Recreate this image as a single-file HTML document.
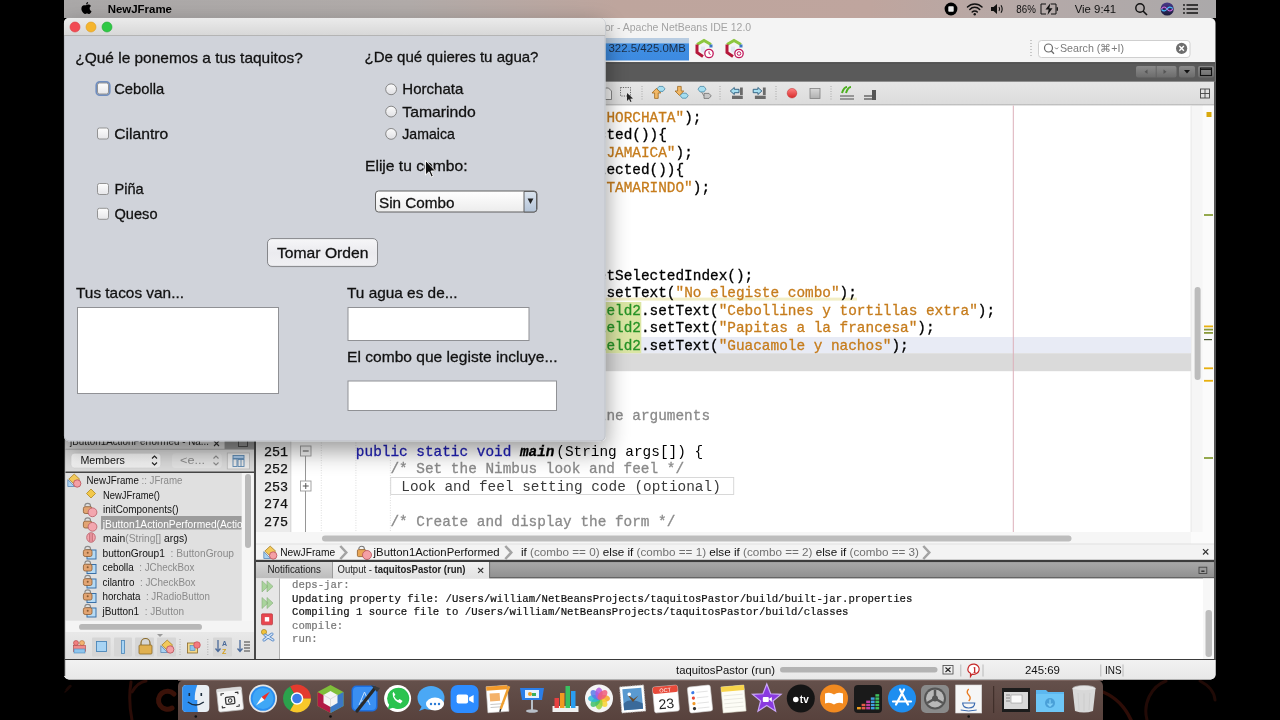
<!DOCTYPE html>
<html><head><meta charset="utf-8"><style>html,body{margin:0;padding:0;background:#000}body{width:1280px;height:720px;overflow:hidden}svg{display:block;will-change:transform}</style></head><body>
<svg width="1280" height="720" viewBox="0 0 1280 720">
<defs><linearGradient id="gmenu" x1="0" y1="0" x2="1" y2="0"><stop offset="0" stop-color="#aaa8a8"/><stop offset="0.3" stop-color="#b1aba9"/><stop offset="0.48" stop-color="#bea59d"/><stop offset="0.7" stop-color="#bfa59e"/><stop offset="0.85" stop-color="#b4a9a8"/><stop offset="1" stop-color="#aba9aa"/></linearGradient><linearGradient id="gsiri" x1="0" y1="0" x2="0" y2="1"><stop offset="0" stop-color="#4a3a8a"/><stop offset="1" stop-color="#1a1a3a"/></linearGradient><linearGradient id="gmem" x1="0" y1="0" x2="0" y2="1"><stop offset="0" stop-color="#b9cde2"/><stop offset="0.22" stop-color="#b9cde2"/><stop offset="0.26" stop-color="#3f8fe3"/><stop offset="1" stop-color="#3d8ae0"/></linearGradient><linearGradient id="gnavbtn" x1="0" y1="0" x2="0" y2="1"><stop offset="0" stop-color="#8a8a8a"/><stop offset="1" stop-color="#6c6c6c"/></linearGradient><linearGradient id="gedtb" x1="0" y1="0" x2="0" y2="1"><stop offset="0" stop-color="#e6e6e6"/><stop offset="1" stop-color="#dcdcdc"/></linearGradient><linearGradient id="grec" x1="0" y1="0" x2="0" y2="1"><stop offset="0" stop-color="#ff8080"/><stop offset="1" stop-color="#d62a2a"/></linearGradient><linearGradient id="gstop" x1="0" y1="0" x2="0" y2="1"><stop offset="0" stop-color="#d8d8d8"/><stop offset="1" stop-color="#b0b0b0"/></linearGradient><linearGradient id="gtabbar" x1="0" y1="0" x2="0" y2="1"><stop offset="0" stop-color="#a8a8a8"/><stop offset="1" stop-color="#8e8e8e"/></linearGradient><linearGradient id="gtabn" x1="0" y1="0" x2="0" y2="1"><stop offset="0" stop-color="#d4d4d4"/><stop offset="1" stop-color="#bcbcbc"/></linearGradient><linearGradient id="gtabo" x1="0" y1="0" x2="0" y2="1"><stop offset="0" stop-color="#f0f0f0"/><stop offset="1" stop-color="#e2e2e2"/></linearGradient><linearGradient id="gstatus" x1="0" y1="0" x2="0" y2="1"><stop offset="0" stop-color="#f2f2f2"/><stop offset="1" stop-color="#e8e8e8"/></linearGradient><linearGradient id="gmcombo" x1="0" y1="0" x2="0" y2="1"><stop offset="0" stop-color="#fbfbfb"/><stop offset="1" stop-color="#eeeeee"/></linearGradient><linearGradient id="gnavtb" x1="0" y1="0" x2="0" y2="1"><stop offset="0" stop-color="#e8e8e8"/><stop offset="1" stop-color="#dedede"/></linearGradient><linearGradient id="gdock" x1="0" y1="0" x2="0" y2="1"><stop offset="0" stop-color="#64504b"/><stop offset="1" stop-color="#58423d"/></linearGradient><filter id="shadow" x="-15%" y="-15%" width="140%" height="140%"><feGaussianBlur in="SourceAlpha" stdDeviation="12"/><feOffset dx="0" dy="9"/><feComponentTransfer><feFuncA type="linear" slope="0.42"/></feComponentTransfer><feMerge><feMergeNode/><feMergeNode in="SourceGraphic"/></feMerge></filter><linearGradient id="gtitle" x1="0" y1="0" x2="0" y2="1"><stop offset="0" stop-color="#ebebeb"/><stop offset="1" stop-color="#d7d7d7"/></linearGradient><linearGradient id="gcb" x1="0" y1="0" x2="0" y2="1"><stop offset="0" stop-color="#fdfdfd"/><stop offset="1" stop-color="#e6e6e9"/></linearGradient><linearGradient id="grb" x1="0" y1="0" x2="0" y2="1"><stop offset="0" stop-color="#fbfbfb"/><stop offset="1" stop-color="#e0e0e4"/></linearGradient><linearGradient id="gcombo" x1="0" y1="0" x2="0" y2="1"><stop offset="0" stop-color="#ffffff"/><stop offset="1" stop-color="#ececec"/></linearGradient><linearGradient id="garrow" x1="0" y1="0" x2="0" y2="1"><stop offset="0" stop-color="#dbe4ee"/><stop offset="1" stop-color="#b4c4d8"/></linearGradient><linearGradient id="gbtn" x1="0" y1="0" x2="0" y2="1"><stop offset="0" stop-color="#f6f6f8"/><stop offset="0.5" stop-color="#ebebef"/><stop offset="1" stop-color="#f0f0f3"/></linearGradient></defs>
<rect x="0" y="0" width="1280" height="720" fill="#000" />
<g fill="none" stroke-linecap="round"><path d="M131 682 Q128 700 132 720" stroke="#2a0c07" stroke-width="3"/><path d="M132 692 Q138 682 146 681" stroke="#2a0c07" stroke-width="3"/><path d="M174 694 A9 9 0 1 0 172 708" stroke="#3a1209" stroke-width="5"/><path d="M66 690 Q70 684 71 686 Q68 690 65 692" stroke="#1a0805" stroke-width="1.5"/><path d="M1103 692 Q1122 700 1131 720" stroke="#2e0d07" stroke-width="3.5"/><path d="M1147 720 A30 32 0 0 1 1166 681" stroke="#220a06" stroke-width="3"/><path d="M1200 681 Q1214 688 1215 700" stroke="#200a06" stroke-width="3"/></g>
<rect x="64" y="0" width="1152" height="18" fill="url(#gmenu)" />
<g transform="translate(80.5,2)"><path d="M5.4 3.2 C 6.4 3.2 7.2 2.6 7.9 2.6 C 9 2.6 10 3.2 10.6 4.1 C 9.6 4.7 9.1 5.6 9.2 6.7 C 9.3 7.9 10 8.8 11 9.2 C 10.6 10.4 9.7 11.8 8.6 11.9 C 7.8 11.9 7.4 11.4 6.5 11.4 C 5.6 11.4 5.1 11.9 4.4 11.9 C 3.2 11.9 1.9 10.2 1.3 8.8 C 0.4 6.5 0.9 4.2 2.6 3.4 C 3.5 3 4.5 3.2 5.4 3.2 Z M7.6 0 C 7.8 1.1 7 2.3 5.7 2.4 C 5.5 1.3 6.4 0.2 7.6 0 Z" fill="#000"/></g>
<text x="107.7" y="13" font-family="Liberation Sans" font-size="11.4" fill="#000" font-weight="bold" textLength="64.3" lengthAdjust="spacingAndGlyphs" >NewJFrame</text>
<circle cx="951" cy="9" r="6.4" fill="#000" />
<rect x="948.3" y="6.3" width="5.4" height="5.4" fill="#e8e8e8" rx="0.8" />
<g fill="none" stroke="#111" stroke-width="1.5" stroke-linecap="round"><path d="M967.5 7 A10 10 0 0 1 982 7"/><path d="M969.8 9.5 A6.8 6.8 0 0 1 979.7 9.5"/><path d="M972.2 12 A3.5 3.5 0 0 1 977.3 12"/></g>
<circle cx="974.75" cy="14.2" r="1.2" fill="#111" />
<path d="M991 7 H993.5 L997 4 V14 L993.5 11 H991 Z" fill="#111"/><g fill="none" stroke="#111" stroke-width="1.1"><path d="M999 7 Q1000.3 9 999 11"/><path d="M1001 5.2 Q1003.4 9 1001 12.8"/></g>
<text x="1016.3" y="13.2" font-family="Liberation Sans" font-size="11.2" fill="#111" textLength="19.5" lengthAdjust="spacingAndGlyphs" >86%</text>
<g fill="none" stroke="#111" stroke-width="1"><path d="M1046 4 H1041 V14 H1046 M1051 4 H1056 V14 H1051"/></g><path d="M1057.3 7.3 V10.7" stroke="#111" stroke-width="1.3"/><path d="M1050.5 3 L1045.5 9.5 H1048.7 L1047.5 15 L1052.5 8.3 H1049.3 Z" fill="#111"/>
<text x="1074.7" y="13.2" font-family="Liberation Sans" font-size="11.6" fill="#111" textLength="41.5" lengthAdjust="spacingAndGlyphs" >Vie 9:41</text>
<circle cx="1140" cy="8" r="4.2" fill="none" stroke="#111" stroke-width="1.4"/><path d="M1143 11 L1147 15" stroke="#111" stroke-width="1.6"/>
<circle cx="1167.2" cy="9" r="6.6" fill="url(#gsiri)" />
<path d="M1161.5 9 Q1164 5 1167 9 T1172.8 9" fill="none" stroke="#d06adf" stroke-width="1.2"/><path d="M1161.5 9.5 Q1164.5 12.5 1167 9 T1172.8 8.5" fill="none" stroke="#4ac0ff" stroke-width="1.1"/>
<g stroke="#111" stroke-width="1.5"><path d="M1186.5 5 H1198 M1186.5 9 H1198 M1186.5 13 H1198"/></g><g fill="#111"><circle cx="1184" cy="5" r="0.9"/><circle cx="1184" cy="9" r="0.9"/><circle cx="1184" cy="13" r="0.9"/></g>
<rect x="64" y="18" width="1151.5" height="661.5" fill="#f4f4f4" rx="5" />
<text x="605.2" y="31" font-family="Liberation Sans" font-size="10.5" fill="#a3a3a3" text-anchor="end" transform="translate(146,0)">taquitosPastor - Apache NetBeans IDE 12.0</text>
<rect x="560" y="38" width="129" height="22.5" fill="url(#gmem)" />
<text x="608.5" y="51.8" font-family="Liberation Sans" font-size="11" fill="#1d2e45" textLength="77.5" lengthAdjust="spacingAndGlyphs" >322.5/425.0MB</text>
<g transform="translate(695,39.5)"><path d="M2 5 L9 1 L16 5" fill="none" stroke="#8cc63f" stroke-width="3"/><path d="M2 5 L2 13 L8 17" fill="none" stroke="#b5183b" stroke-width="3"/><path d="M16 5 L16 8" fill="none" stroke="#3a76c4" stroke-width="3"/><path d="M6 7 L10 7 L10 14 L6 12 Z" fill="#dfe7f2"/><circle cx="14" cy="14" r="4.2" fill="#fff" stroke="#c2185b" stroke-width="1.3"/><path d="M14 11.8 V14 L15.6 15" stroke="#c2185b" stroke-width="1" fill="none"/></g>
<g transform="translate(725,39.5)"><path d="M2 5 L9 1 L16 5" fill="none" stroke="#8cc63f" stroke-width="3"/><path d="M2 5 L2 13 L8 17" fill="none" stroke="#b5183b" stroke-width="3"/><path d="M16 5 L16 8" fill="none" stroke="#3a76c4" stroke-width="3"/><path d="M6 7 L10 7 L10 14 L6 12 Z" fill="#dfe7f2"/><circle cx="14" cy="14" r="4.2" fill="#fff" stroke="#c2185b" stroke-width="1.3"/><circle cx="14" cy="14" r="1.8" fill="none" stroke="#c2185b" stroke-width="1"/></g>
<line x1="1031" y1="40" x2="1031" y2="58" stroke="#9a9a9a" stroke-width="1" stroke-dasharray="1 2"/>
<rect x="1038.5" y="40.5" width="151.5" height="17" fill="#ffffff" rx="3" stroke="#cfcfcf" stroke-width="1" />
<circle cx="1048.5" cy="48" r="4" fill="none" stroke="#6a6a6a" stroke-width="1.2"/><path d="M1051.3 51 L1054 53.8" stroke="#6a6a6a" stroke-width="1.3"/><path d="M1055 47.5 l1.6 1.6 l1.6 -1.6" fill="none" stroke="#6a6a6a" stroke-width="0.9"/>
<text x="1060" y="52.3" font-family="Liberation Sans" font-size="10.8" fill="#7b7b7b" textLength="64" lengthAdjust="spacingAndGlyphs" >Search (⌘+I)</text>
<circle cx="1181.6" cy="48.4" r="5.6" fill="#6e6e6e" />
<path d="M1179.3 46.1 L1183.9 50.7 M1183.9 46.1 L1179.3 50.7" stroke="#fff" stroke-width="1.4"/>
<rect x="64" y="62.3" width="1151.5" height="19.5" fill="#5a5a5a" />
<line x1="64" y1="62.8" x2="1215" y2="62.8" stroke="#444444" stroke-width="1" />
<rect x="1136" y="66" width="40.5" height="11.5" fill="url(#gnavbtn)" rx="2" />
<line x1="1156.2" y1="66" x2="1156.2" y2="77.5" stroke="#5e5e5e" stroke-width="0.8" />
<path d="M1147.5 69.5 L1144.5 71.75 L1147.5 74 Z M1163.5 69.5 L1166.5 71.75 L1163.5 74 Z" fill="#555"/>
<rect x="1179" y="66" width="16" height="11.5" fill="url(#gnavbtn)" rx="2" />
<path d="M1184 70 H1190 L1187 73.5 Z" fill="#111"/>
<rect x="1198" y="66" width="16" height="11.5" fill="url(#gnavbtn)" rx="2" />
<rect x="1200.5" y="68" width="11" height="7.5" fill="none" stroke="#111" stroke-width="1.1" />
<line x1="1200.5" y1="69.3" x2="1211.5" y2="69.3" stroke="#111" stroke-width="1.2" />
<rect x="256" y="81.8" width="958.5" height="23" fill="url(#gedtb)" />
<line x1="256" y1="105" x2="1214.5" y2="105" stroke="#9e9e9e" stroke-width="1" />
<path d="M605 88 h3.5 l3 3 v8.5 h-6.5 Z" fill="#f4f4f4" stroke="#7a7a7a" stroke-width="0.9"/>
<rect x="620.5" y="87.5" width="10" height="8.5" fill="none" stroke="#5a5a5a" stroke-width="0.9" stroke-dasharray="1.2 1.2"/>
<path d="M627 93 L627 101 L629 99 L630.5 102 L631.5 101.5 L630.2 98.7 L633 98.5 Z" fill="#222"/>
<line x1="642" y1="86" x2="642" y2="100" stroke="#a8a8a8" stroke-width="1" stroke-dasharray="1 1.5"/>
<path d="M659 86.4 H663 L665 88.9 L663 91.4 H659 L657 88.9 Z" fill="#a6def0" stroke="#4a8aa8" stroke-width="0.8"/>
<path d="M656.4 88.4 L652 93 H654.6 V98.4 H658.2 V93 H660.8 Z" fill="#f2b866" stroke="#a06a20" stroke-width="0.8"/>
<path d="M682.2 93.2 H686.2 L688.2 95.7 L686.2 98.2 H682.2 L680.2 95.7 Z" fill="#a6def0" stroke="#4a8aa8" stroke-width="0.8"/>
<path d="M677.6 86.4 V91 H675 L679.4 95.4 L683.8 91 H681.2 V86.4 Z" fill="#f2b866" stroke="#a06a20" stroke-width="0.8"/>
<path d="M700 86.4 H704 L706 89.15 L704 91.9 H700 L698 89.15 Z" fill="#a6def0" stroke="#4a8aa8" stroke-width="0.8"/>
<path d="M704 93.4 H709 L711.2 95.9 L709 98.4 H704 Z" fill="#c8c8c8" stroke="#707070" stroke-width="0.8"/>
<line x1="701.5" y1="92" x2="704" y2="96" stroke="#777" stroke-width="0.8" />
<line x1="720" y1="86" x2="720" y2="100" stroke="#a8a8a8" stroke-width="1" stroke-dasharray="1 1.5"/>
<rect x="740.0" y="87.5" width="2.8" height="7.5" fill="#6a6a6a" />
<rect x="732.0" y="95.7" width="10.8" height="3.3" fill="#6a6a6a" />
<path d="M730.3 91 L734.3 87.5 V89.3 H739.0 V92.7 H734.3 V94.5 Z" fill="#a6def0" stroke="#2a5a7a" stroke-width="0.9"/>
<rect x="762.9000000000001" y="87.5" width="2.8" height="7.5" fill="#6a6a6a" />
<rect x="754.9000000000001" y="95.7" width="10.8" height="3.3" fill="#6a6a6a" />
<path d="M761.9000000000001 91 L757.9000000000001 87.5 V89.3 H753.2 V92.7 H757.9000000000001 V94.5 Z" fill="#a6def0" stroke="#2a5a7a" stroke-width="0.9"/>
<line x1="776" y1="86" x2="776" y2="100" stroke="#a8a8a8" stroke-width="1" stroke-dasharray="1 1.5"/>
<circle cx="792" cy="93.2" r="4.8" fill="url(#grec)" stroke="#c03030" stroke-width="0.5" />
<rect x="810" y="88.5" width="10" height="10" fill="url(#gstop)" stroke="#808080" stroke-width="0.8" />
<line x1="831" y1="86" x2="831" y2="100" stroke="#a8a8a8" stroke-width="1" stroke-dasharray="1 1.5"/>
<line x1="840" y1="96" x2="854" y2="96" stroke="#666" stroke-width="1.2" />
<line x1="840" y1="99" x2="854" y2="99" stroke="#666" stroke-width="1.2" />
<path d="M842 93 q2 -6 5 -6 M846 93 q2 -6 5 -6" fill="none" stroke="#4caf1f" stroke-width="2"/>
<line x1="864" y1="96" x2="876" y2="96" stroke="#555" stroke-width="1.3" />
<line x1="864" y1="99" x2="876" y2="99" stroke="#555" stroke-width="1.3" />
<rect x="872" y="90" width="4" height="10" fill="#555" />
<rect x="1200.5" y="89" width="9" height="9" fill="none" stroke="#444" stroke-width="0.9" />
<line x1="1205" y1="89" x2="1205" y2="98" stroke="#444" stroke-width="0.9" />
<line x1="1200.5" y1="93.5" x2="1209.5" y2="93.5" stroke="#444" stroke-width="0.9" />
<rect x="256" y="105.5" width="935" height="427" fill="#ffffff" />
<rect x="1191" y="105.5" width="11.5" height="427" fill="#f6f6f6" />
<line x1="1191" y1="105.5" x2="1191" y2="532" stroke="#e4e4e4" stroke-width="0.8" />
<rect x="1202.5" y="105.5" width="11.5" height="427" fill="#fbfbfb" />
<rect x="1194.6" y="287" width="6" height="93" fill="#bcbcbc" rx="3" />
<rect x="1206.5" y="112" width="5" height="5" fill="#d9a90e" />
<line x1="1204" y1="215" x2="1213" y2="215" stroke="#8aa03a" stroke-width="1.8" />
<line x1="1204" y1="326.4" x2="1213" y2="326.4" stroke="#e8b010" stroke-width="1.8" />
<line x1="1204" y1="329.6" x2="1213" y2="329.6" stroke="#8a9a3a" stroke-width="1.8" />
<line x1="1204" y1="332.9" x2="1213" y2="332.9" stroke="#8a9a3a" stroke-width="1.8" />
<line x1="1204" y1="368.3" x2="1213" y2="368.3" stroke="#e8b010" stroke-width="1.8" />
<line x1="1204" y1="380.8" x2="1213" y2="380.8" stroke="#e8b010" stroke-width="1.8" />
<line x1="1204" y1="458" x2="1213" y2="458" stroke="#8aa03a" stroke-width="1.8" />
<line x1="1204" y1="339.6" x2="1212" y2="339.6" stroke="#4a5a30" stroke-width="1.2" />
<rect x="256" y="337" width="935" height="16.2" fill="#e8ebf5" />
<rect x="256" y="353.2" width="935" height="18" fill="#dadada" />
<rect x="600" y="302" width="41.3" height="51.2" fill="#dbe6a4" />
<rect x="600" y="297.6" width="257" height="3" fill="#f2eec6" />
<line x1="1013.3" y1="105.5" x2="1013.3" y2="532" stroke="#dcb0ba" stroke-width="1" />
<rect x="256" y="105.5" width="34.5" height="427" fill="#ebebeb" />
<line x1="290.8" y1="105.5" x2="290.8" y2="532" stroke="#c8c8c8" stroke-width="0.8" />
<line x1="321.3" y1="440" x2="321.3" y2="532" stroke="#d6d6d6" stroke-width="0.8" stroke-dasharray="1 1.5"/>
<line x1="355.9" y1="440" x2="355.9" y2="532" stroke="#d6d6d6" stroke-width="0.8" stroke-dasharray="1 1.5"/>
<line x1="390.4" y1="460" x2="390.4" y2="532" stroke="#d6d6d6" stroke-width="0.8" stroke-dasharray="1 1.5"/>
<text x="597.78" y="121.5" font-family="Liberation Mono" font-size="14.4" xml:space="preserve"><tspan fill="#c67c1c" stroke="#c67c1c" stroke-width="0.3" >"</tspan><tspan fill="#c67c1c" stroke="#c67c1c" stroke-width="0.3" >HORCHATA"</tspan><tspan fill="#000000" stroke="#000000" stroke-width="0.3" >);</tspan></text>
<text x="597.78" y="139.08" font-family="Liberation Mono" font-size="14.4" xml:space="preserve"><tspan fill="#000000" stroke="#000000" stroke-width="0.3" >cted()){</tspan></text>
<text x="597.78" y="156.66" font-family="Liberation Mono" font-size="14.4" xml:space="preserve"><tspan fill="#c67c1c" stroke="#c67c1c" stroke-width="0.3" >"JAMAICA"</tspan><tspan fill="#000000" stroke="#000000" stroke-width="0.3" >);</tspan></text>
<text x="597.78" y="174.24" font-family="Liberation Mono" font-size="14.4" xml:space="preserve"><tspan fill="#000000" stroke="#000000" stroke-width="0.3" >lected()){</tspan></text>
<text x="597.78" y="191.82" font-family="Liberation Mono" font-size="14.4" xml:space="preserve"><tspan fill="#c67c1c" stroke="#c67c1c" stroke-width="0.3" >"TAMARINDO"</tspan><tspan fill="#000000" stroke="#000000" stroke-width="0.3" >);</tspan></text>
<text x="597.78" y="279.72" font-family="Liberation Mono" font-size="14.4" xml:space="preserve"><tspan fill="#000000" stroke="#000000" stroke-width="0.3" >etSelectedIndex();</tspan></text>
<text x="597.78" y="297.3" font-family="Liberation Mono" font-size="14.4" xml:space="preserve"><tspan fill="#000000" stroke="#000000" stroke-width="0.3" >.setText(</tspan><tspan fill="#c67c1c" stroke="#c67c1c" stroke-width="0.3" >"No elegiste combo"</tspan><tspan fill="#000000" stroke="#000000" stroke-width="0.3" >);</tspan></text>
<text x="597.78" y="314.88" font-family="Liberation Mono" font-size="14.4" xml:space="preserve"><tspan fill="#269326" stroke="#269326" stroke-width="0.3" >i</tspan><tspan fill="#269326" stroke="#269326" stroke-width="0.3" >eld2</tspan><tspan fill="#000000" stroke="#000000" stroke-width="0.3" >.setText(</tspan><tspan fill="#c67c1c" stroke="#c67c1c" stroke-width="0.3" >"Cebollines y tortillas extra"</tspan><tspan fill="#000000" stroke="#000000" stroke-width="0.3" >);</tspan></text>
<text x="597.78" y="332.46" font-family="Liberation Mono" font-size="14.4" xml:space="preserve"><tspan fill="#269326" stroke="#269326" stroke-width="0.3" >i</tspan><tspan fill="#269326" stroke="#269326" stroke-width="0.3" >eld2</tspan><tspan fill="#000000" stroke="#000000" stroke-width="0.3" >.setText(</tspan><tspan fill="#c67c1c" stroke="#c67c1c" stroke-width="0.3" >"Papitas a la francesa"</tspan><tspan fill="#000000" stroke="#000000" stroke-width="0.3" >);</tspan></text>
<text x="597.78" y="350.04" font-family="Liberation Mono" font-size="14.4" xml:space="preserve"><tspan fill="#269326" stroke="#269326" stroke-width="0.3" >i</tspan><tspan fill="#269326" stroke="#269326" stroke-width="0.3" >eld2</tspan><tspan fill="#000000" stroke="#000000" stroke-width="0.3" >.setText(</tspan><tspan fill="#c67c1c" stroke="#c67c1c" stroke-width="0.3" >"Guacamole y nachos"</tspan><tspan fill="#000000" stroke="#000000" stroke-width="0.3" >);</tspan></text>
<text x="589.14" y="420.36" font-family="Liberation Mono" font-size="14.4" xml:space="preserve"><tspan fill="#8a8a8a" stroke="#8a8a8a" stroke-width="0.3" >line arguments</tspan></text>
<text x="355.86" y="455.52" font-family="Liberation Mono" font-size="14.4" xml:space="preserve"><tspan fill="#1f1fb4" stroke="#1f1fb4" stroke-width="0.3" >public static void </tspan><tspan fill="#000000" stroke="#000000" stroke-width="0.3" font-weight="bold" font-style="italic">main</tspan></text>
<text x="556.28" y="455.52" font-family="Liberation Mono" font-size="14.4" fill="#000">(String args[]) {</text>
<text x="390.42" y="473.1" font-family="Liberation Mono" font-size="14.4" xml:space="preserve"><tspan fill="#8a8a8a" stroke="#8a8a8a" stroke-width="0.3" >/* Set the Nimbus look and feel */</tspan></text>
<rect x="390.72" y="477.47999999999996" width="343" height="17" fill="#ffffff" stroke="#d4d4d4" stroke-width="0.9" />
<text x="401.26" y="490.68" font-family="Liberation Mono" font-size="14.4" fill="#3a3a3a">Look and feel setting code (optional)</text>
<text x="390.42" y="525.84" font-family="Liberation Mono" font-size="14.4" xml:space="preserve"><tspan fill="#8a8a8a" stroke="#8a8a8a" stroke-width="0.3" >/* Create and display the form */</tspan></text>
<text x="288" y="455.52" font-family="Liberation Mono" font-size="13.4" fill="#111" text-anchor="end" stroke="#111" stroke-width="0.25">251</text>
<text x="288" y="473.1" font-family="Liberation Mono" font-size="13.4" fill="#111" text-anchor="end" stroke="#111" stroke-width="0.25">252</text>
<text x="288" y="490.68" font-family="Liberation Mono" font-size="13.4" fill="#111" text-anchor="end" stroke="#111" stroke-width="0.25">253</text>
<text x="288" y="508.26" font-family="Liberation Mono" font-size="13.4" fill="#111" text-anchor="end" stroke="#111" stroke-width="0.25">274</text>
<text x="288" y="525.84" font-family="Liberation Mono" font-size="13.4" fill="#111" text-anchor="end" stroke="#111" stroke-width="0.25">275</text>
<line x1="305.5" y1="456" x2="305.5" y2="532" stroke="#8a8a8a" stroke-width="0.9" />
<rect x="300.5" y="446" width="10.5" height="10" fill="#f4f4f4" stroke="#9a9a9a" stroke-width="0.9" />
<line x1="302.8" y1="451" x2="308.7" y2="451" stroke="#555" stroke-width="1" />
<rect x="300.5" y="481" width="10.5" height="10" fill="#ffffff" stroke="#9a9a9a" stroke-width="0.9" />
<line x1="302.8" y1="486" x2="308.7" y2="486" stroke="#555" stroke-width="1" />
<line x1="305.75" y1="483" x2="305.75" y2="489" stroke="#555" stroke-width="1" />
<rect x="256" y="532" width="958" height="12" fill="#f6f6f6" />
<rect x="1191" y="532" width="23" height="12" fill="#fbfbfb" />
<rect x="322" y="535.5" width="749.5" height="6" fill="#bdbdbd" rx="3" />
<rect x="256" y="544" width="958.5" height="16.5" fill="#f3f3f3" />
<line x1="256" y1="544" x2="1214" y2="544" stroke="#dcdcdc" stroke-width="0.8" />
<g transform="translate(263,545.5)"><path d="M7.2 0.6 L12.6 5.6 L7.2 10.6 L1.8 5.6 Z" fill="#f2c95a" stroke="#a8822a" stroke-width="0.8"/><path d="M0.8 13 V6.2 L7.6 13 Z" fill="#a9d2f2" stroke="#5a88b5" stroke-width="0.8"/><circle cx="10.2" cy="10" r="3.7" fill="#f4a0a6" stroke="#b85058" stroke-width="0.8"/></g>
<text x="280.2" y="555.8" font-family="Liberation Sans" font-size="11" fill="#111" textLength="55" lengthAdjust="spacingAndGlyphs" >NewJFrame</text>
<path d="M340.3 546 L346.3 552.5 L340.3 559" fill="none" stroke="#a3a3a3" stroke-width="2.5"/>
<g transform="translate(357,545)"><path d="M1.8 4 a2.8 2.8 0 0 1 5.6 0 v1" fill="none" stroke="#777" stroke-width="1.1"/><rect x="0.4" y="4.6" width="8.4" height="7" rx="1.2" fill="#e9a656" stroke="#8a5a2a" stroke-width="0.8"/><circle cx="10" cy="10" r="4.5" fill="#f4a0a6" stroke="#b85058" stroke-width="0.8"/></g>
<text x="373.6" y="555.8" font-family="Liberation Sans" font-size="11" fill="#111" textLength="126" lengthAdjust="spacingAndGlyphs" >jButton1ActionPerformed</text>
<path d="M505.3 546 L511.3 552.5 L505.3 559" fill="none" stroke="#a3a3a3" stroke-width="2.5"/>
<text x="521" y="555.8" font-family="Liberation Sans" font-size="11.2" fill="#111" textLength="398" lengthAdjust="spacingAndGlyphs">if <tspan fill="#707070">(combo == 0)</tspan> else if <tspan fill="#707070">(combo == 1)</tspan> else if <tspan fill="#707070">(combo == 2)</tspan> else if <tspan fill="#707070">(combo == 3)</tspan></text>
<path d="M923.3 546 L929.3 552.5 L923.3 559" fill="none" stroke="#a3a3a3" stroke-width="2.5"/>
<path d="M1203 549.2 L1208.3 554.5 M1208.3 549.2 L1203 554.5" stroke="#333" stroke-width="1.2"/>
<rect x="256" y="559.8" width="958.5" height="2.7" fill="#3c3c3c" />
<rect x="256" y="562.5" width="958.5" height="16" fill="url(#gtabbar)" />
<line x1="489.6" y1="578" x2="1214" y2="578" stroke="#3a3a3a" stroke-width="1.2" />
<rect x="256" y="562" width="76.7" height="16.5" fill="url(#gtabn)" />
<line x1="332.7" y1="562" x2="332.7" y2="578.5" stroke="#8a8a8a" stroke-width="0.8" />
<rect x="333" y="562" width="156.6" height="16.5" fill="url(#gtabo)" />
<line x1="489.6" y1="562" x2="489.6" y2="578.5" stroke="#6a6a6a" stroke-width="1" />
<text x="267.5" y="573.3" font-family="Liberation Sans" font-size="10.8" fill="#222" textLength="53.5" lengthAdjust="spacingAndGlyphs" >Notifications</text>
<text x="337.5" y="573.3" font-family="Liberation Sans" font-size="10.8" fill="#222" textLength="128" lengthAdjust="spacingAndGlyphs">Output - <tspan font-weight="bold">taquitosPastor (run)</tspan></text>
<path d="M478.1 568 L483.2 572.9 M483.2 568 L478.1 572.9" stroke="#333" stroke-width="1.1"/>
<rect x="1199" y="567.2" width="7.8" height="6.3" fill="#9c9c9c" stroke="#444" stroke-width="0.9" />
<line x1="1201.3" y1="571.2" x2="1204.5" y2="571.2" stroke="#222" stroke-width="1.3" />
<rect x="256" y="578.5" width="958.5" height="80.5" fill="#ffffff" />
<rect x="256" y="578.5" width="23.3" height="80.5" fill="#e6e6e6" />
<line x1="279.5" y1="578.5" x2="279.5" y2="659" stroke="#a8a8a8" stroke-width="0.9" />
<path d="M262 580.9 L268 586.4 L262 591.9 Z M267 580.9 L273 586.4 L267 591.9 Z" fill="#a9d49c" stroke="#86ad7a" stroke-width="0.6"/>
<path d="M262 597.5 L268 603 L262 608.5 Z M267 597.5 L273 603 L267 608.5 Z" fill="#a9d49c" stroke="#86ad7a" stroke-width="0.6"/>
<rect x="261.5" y="613.8" width="11" height="11" fill="#e8474f" rx="1" stroke="#b02a30" stroke-width="0.6" />
<rect x="264.8" y="617.1" width="4.4" height="4.4" fill="#ffffff" />
<g transform="translate(261,629)"><circle cx="3" cy="3" r="2.6" fill="#f2c23a" stroke="#9a7a1a" stroke-width="0.6"/><path d="M3 11 L11 5 M4 6 L12 11" stroke="#5a8ac8" stroke-width="3" stroke-linecap="round"/><path d="M3 11 L11 5 M4 6 L12 11" stroke="#d8e8f8" stroke-width="1.4" stroke-linecap="round"/></g>
<text x="292.09999999999997" y="588.4" font-family="Liberation Mono" font-size="10.67" fill="#777777" stroke="#777777" stroke-width="0.2">deps-jar:</text>
<text x="292.09999999999997" y="601.9" font-family="Liberation Mono" font-size="10.67" fill="#111" stroke="#111" stroke-width="0.2">Updating property file: /Users/william/NetBeansProjects/taquitosPastor/build/built-jar.properties</text>
<text x="292.09999999999997" y="615.4" font-family="Liberation Mono" font-size="10.67" fill="#111" stroke="#111" stroke-width="0.2">Compiling 1 source file to /Users/william/NetBeansProjects/taquitosPastor/build/classes</text>
<text x="292.09999999999997" y="628.9" font-family="Liberation Mono" font-size="10.67" fill="#777777" stroke="#777777" stroke-width="0.2">compile:</text>
<text x="292.09999999999997" y="642.4" font-family="Liberation Mono" font-size="10.67" fill="#777777" stroke="#777777" stroke-width="0.2">run:</text>
<rect x="1203" y="578.5" width="11.5" height="80.5" fill="#f7f7f7" />
<rect x="1205.5" y="610" width="6.5" height="47" fill="#bdbdbd" rx="3" />
<path d="M64 660 H1215.5 V674.5 A5 5 0 0 1 1210.5 679.5 H69 A5 5 0 0 1 64 674.5 Z" fill="url(#gstatus)"/>
<line x1="64" y1="659.5" x2="1215.5" y2="659.5" stroke="#3a3a3a" stroke-width="1.2" />
<text x="676" y="673.5" font-family="Liberation Sans" font-size="11" fill="#111" textLength="99" lengthAdjust="spacingAndGlyphs" >taquitosPastor (run)</text>
<rect x="780" y="667" width="157.5" height="5.5" fill="#b3b3b3" rx="2.75" />
<rect x="943" y="665.5" width="10" height="8.5" fill="#f0f0f0" stroke="#555" stroke-width="0.9" />
<path d="M945.5 667.5 L950.5 672 M950.5 667.5 L945.5 672" stroke="#222" stroke-width="1.1"/>
<line x1="960.8" y1="664.5" x2="960.8" y2="676.5" stroke="#b4b4b4" stroke-width="0.9" />
<line x1="983" y1="664.5" x2="983" y2="676.5" stroke="#b4b4b4" stroke-width="0.9" />
<line x1="1100.8" y1="664.5" x2="1100.8" y2="676.5" stroke="#b4b4b4" stroke-width="0.9" />
<line x1="1123" y1="664.5" x2="1123" y2="676.5" stroke="#b4b4b4" stroke-width="0.9" />
<g transform="translate(968,663.5)"><path d="M6.5 0.7 a5.8 5 0 1 1 -2.5 10 l-1.5 2.3 l0 -3.2 a5.8 5 0 0 1 4 -9.1 Z" fill="#fff" stroke="#c62828" stroke-width="1.2"/><text x="6.4" y="9" font-family="Liberation Serif" font-weight="bold" font-size="9" fill="#c62828" text-anchor="middle">1</text></g>
<text x="1025" y="673.7" font-family="Liberation Sans" font-size="11.5" fill="#111" textLength="35" lengthAdjust="spacingAndGlyphs" >245:69</text>
<text x="1105" y="673.7" font-family="Liberation Sans" font-size="11.5" fill="#111" textLength="16.5" lengthAdjust="spacingAndGlyphs" >INS</text>
<rect x="64" y="435" width="190.5" height="225" fill="#e2e2e2" />
<line x1="64.6" y1="23" x2="64.6" y2="676" stroke="#3c3c3c" stroke-width="1.2" />
<rect x="65.5" y="435" width="159" height="14.3" fill="#d3d3d3" />
<rect x="224.5" y="435" width="29.5" height="14.3" fill="#8f8f8f" />
<text x="70" y="444.6" font-family="Liberation Sans" font-size="10.5" fill="#222" textLength="139" lengthAdjust="spacingAndGlyphs" >jButton1ActionPerformed - Na...</text>
<path d="M214 441 L219 446 M219 441 L214 446" stroke="#333" stroke-width="1.1"/>
<rect x="238.5" y="440" width="9" height="6.5" fill="none" stroke="#444" stroke-width="0.9" />
<line x1="65.5" y1="449.3" x2="254" y2="449.3" stroke="#a0a0a0" stroke-width="1" />
<rect x="65.5" y="449.8" width="188.5" height="22.4" fill="#dadada" />
<rect x="71" y="453.2" width="89.8" height="14.8" fill="url(#gmcombo)" rx="3.5" stroke="#d0d0d0" stroke-width="0.6" />
<text x="80.4" y="463.8" font-family="Liberation Sans" font-size="10.8" fill="#111" textLength="44.5" lengthAdjust="spacingAndGlyphs" >Members</text>
<path d="M152 458.5 L154.5 456 L157 458.5 M152 462.5 L154.5 465 L157 462.5" fill="none" stroke="#222" stroke-width="1.1"/>
<rect x="172" y="453.2" width="49.7" height="14.8" fill="#e2e2e2" rx="3.5" />
<text x="180" y="463.8" font-family="Liberation Sans" font-size="10.8" fill="#8a8a8a" textLength="25" lengthAdjust="spacingAndGlyphs" >&lt;e...</text>
<path d="M213.5 458.5 L216 456 L218.5 458.5 M213.5 462.5 L216 465 L218.5 462.5" fill="none" stroke="#8a8a8a" stroke-width="1.1"/>
<rect x="227.3" y="453" width="22.2" height="16" fill="#eaeaea" stroke="#b8b8b8" stroke-width="0.8" />
<g fill="none" stroke="#5a86b0" stroke-width="0.9"><rect x="233" y="455.5" width="11" height="3" fill="#a8c8e8"/><rect x="233" y="459" width="4" height="7.5"/><rect x="238" y="459.5" width="6" height="7"/><path d="M241 459.5 V466.5"/></g>
<line x1="65.5" y1="472.3" x2="254" y2="472.3" stroke="#464646" stroke-width="1.4" />
<rect x="65.5" y="473" width="176.3" height="148" fill="#e0e0e0" />
<rect x="241.8" y="473" width="12" height="148" fill="#f6f6f6" />
<rect x="245" y="474" width="6" height="74" fill="#bababa" rx="3" />
<rect x="65.5" y="620.7" width="188.5" height="11.6" fill="#f4f4f4" />
<rect x="79" y="624" width="123" height="5.8" fill="#b8b8b8" rx="2.9" />
<rect x="101" y="516" width="140.5" height="13.5" fill="#9b9b9b" />
<g transform="translate(67,473.5)"><path d="M7.2 0.6 L12.6 5.6 L7.2 10.6 L1.8 5.6 Z" fill="#f2c95a" stroke="#a8822a" stroke-width="0.8"/><path d="M0.8 13 V6.2 L7.6 13 Z" fill="#a9d2f2" stroke="#5a88b5" stroke-width="0.8"/><circle cx="10.2" cy="10" r="3.7" fill="#f4a0a6" stroke="#b85058" stroke-width="0.8"/></g>
<text x="86.5" y="484.0" font-family="Liberation Sans" font-size="10.3" fill="#111" textLength="96" lengthAdjust="spacingAndGlyphs">NewJFrame <tspan fill="#8a8a8a">:: JFrame</tspan></text>
<path d="M86.5 493.5 L91 489.0 L95.5 493.5 L91 498.0 Z" fill="#f2c84a" stroke="#b08a20" stroke-width="0.8"/>
<text x="103" y="498.5" font-family="Liberation Sans" font-size="10.3" fill="#111" textLength="57" lengthAdjust="spacingAndGlyphs" >NewJFrame()</text>
<g transform="translate(83,502.5)"><path d="M1.8 3.8 a2.9 2.9 0 0 1 5.8 0 v1" fill="none" stroke="#8a8a8a" stroke-width="1.1"/><rect x="0.4" y="4.2" width="8.6" height="6.8" rx="1.8" fill="#e2a472" stroke="#8a5a30" stroke-width="0.8"/><circle cx="9.5" cy="9.8" r="4.4" fill="#f3a6ae" stroke="#b85a64" stroke-width="0.8"/></g>
<text x="103" y="513.0" font-family="Liberation Sans" font-size="10.3" fill="#111" textLength="75.5" lengthAdjust="spacingAndGlyphs" >initComponents()</text>
<g transform="translate(83,517.0)"><path d="M1.8 3.8 a2.9 2.9 0 0 1 5.8 0 v1" fill="none" stroke="#8a8a8a" stroke-width="1.1"/><rect x="0.4" y="4.2" width="8.6" height="6.8" rx="1.8" fill="#e2a472" stroke="#8a5a30" stroke-width="0.8"/><circle cx="9.5" cy="9.8" r="4.4" fill="#f3a6ae" stroke="#b85a64" stroke-width="0.8"/></g>
<text x="102.8" y="527.5" font-family="Liberation Sans" font-size="10.3" fill="#ffffff" textLength="140" lengthAdjust="spacingAndGlyphs" >jButton1ActionPerformed(Actio</text>
<g transform="translate(86,533.0)"><ellipse cx="5" cy="4.5" rx="4.3" ry="4.8" fill="#f3a6ae" stroke="#b85a64" stroke-width="0.8"/><path d="M3.8 0.5 V8.5 M6.2 0.5 V8.5" stroke="#b85a64" stroke-width="0.9"/></g>
<text x="103" y="542.0" font-family="Liberation Sans" font-size="10.3" fill="#111" textLength="84.5" lengthAdjust="spacingAndGlyphs">main<tspan fill="#8a8a8a">(String[]</tspan> args)</text>
<g transform="translate(83,545.5)"><rect x="4" y="4.5" width="9" height="9" fill="#b6daf4" stroke="#3a70a8" stroke-width="1"/><path d="M1.8 3.8 a2.9 2.9 0 0 1 5.8 0 v1" fill="none" stroke="#8a8a8a" stroke-width="1.1"/><rect x="0.4" y="4.2" width="8.6" height="6.8" rx="1.8" fill="#e2a472" stroke="#8a5a30" stroke-width="0.8"/><circle cx="4.7" cy="7.3" r="1" fill="#8a5a30"/></g>
<text x="102.5" y="556.5" font-family="Liberation Sans" font-size="10.3" fill="#111" textLength="131.5" lengthAdjust="spacingAndGlyphs" xml:space="preserve">buttonGroup1  <tspan fill="#8a8a8a">: ButtonGroup</tspan></text>
<g transform="translate(83,560.0)"><rect x="4" y="4.5" width="9" height="9" fill="#b6daf4" stroke="#3a70a8" stroke-width="1"/><path d="M1.8 3.8 a2.9 2.9 0 0 1 5.8 0 v1" fill="none" stroke="#8a8a8a" stroke-width="1.1"/><rect x="0.4" y="4.2" width="8.6" height="6.8" rx="1.8" fill="#e2a472" stroke="#8a5a30" stroke-width="0.8"/><circle cx="4.7" cy="7.3" r="1" fill="#8a5a30"/></g>
<text x="102.5" y="571.0" font-family="Liberation Sans" font-size="10.3" fill="#111" textLength="92" lengthAdjust="spacingAndGlyphs" xml:space="preserve">cebolla  <tspan fill="#8a8a8a">: JCheckBox</tspan></text>
<g transform="translate(83,574.5)"><rect x="4" y="4.5" width="9" height="9" fill="#b6daf4" stroke="#3a70a8" stroke-width="1"/><path d="M1.8 3.8 a2.9 2.9 0 0 1 5.8 0 v1" fill="none" stroke="#8a8a8a" stroke-width="1.1"/><rect x="0.4" y="4.2" width="8.6" height="6.8" rx="1.8" fill="#e2a472" stroke="#8a5a30" stroke-width="0.8"/><circle cx="4.7" cy="7.3" r="1" fill="#8a5a30"/></g>
<text x="102.5" y="585.5" font-family="Liberation Sans" font-size="10.3" fill="#111" textLength="93" lengthAdjust="spacingAndGlyphs" xml:space="preserve">cilantro  <tspan fill="#8a8a8a">: JCheckBox</tspan></text>
<g transform="translate(83,589.0)"><rect x="4" y="4.5" width="9" height="9" fill="#b6daf4" stroke="#3a70a8" stroke-width="1"/><path d="M1.8 3.8 a2.9 2.9 0 0 1 5.8 0 v1" fill="none" stroke="#8a8a8a" stroke-width="1.1"/><rect x="0.4" y="4.2" width="8.6" height="6.8" rx="1.8" fill="#e2a472" stroke="#8a5a30" stroke-width="0.8"/><circle cx="4.7" cy="7.3" r="1" fill="#8a5a30"/></g>
<text x="102.5" y="600.0" font-family="Liberation Sans" font-size="10.3" fill="#111" textLength="107.5" lengthAdjust="spacingAndGlyphs" xml:space="preserve">horchata  <tspan fill="#8a8a8a">: JRadioButton</tspan></text>
<g transform="translate(83,603.5)"><rect x="4" y="4.5" width="9" height="9" fill="#b6daf4" stroke="#3a70a8" stroke-width="1"/><path d="M1.8 3.8 a2.9 2.9 0 0 1 5.8 0 v1" fill="none" stroke="#8a8a8a" stroke-width="1.1"/><rect x="0.4" y="4.2" width="8.6" height="6.8" rx="1.8" fill="#e2a472" stroke="#8a5a30" stroke-width="0.8"/><circle cx="4.7" cy="7.3" r="1" fill="#8a5a30"/></g>
<text x="102.5" y="614.5" font-family="Liberation Sans" font-size="10.3" fill="#111" textLength="81.5" lengthAdjust="spacingAndGlyphs" xml:space="preserve">jButton1  <tspan fill="#8a8a8a">: JButton</tspan></text>
<rect x="65.5" y="632.3" width="188.5" height="27" fill="url(#gnavtb)" />
<path d="M157 634 L160 637 L163 634 Z" fill="#9a9a9a"/>
<rect x="92" y="637.5" width="18.599999999999994" height="19" fill="#d6d6d6" rx="1" />
<rect x="114" y="637.5" width="18" height="19" fill="#d6d6d6" rx="1" />
<rect x="135" y="637.5" width="19" height="19" fill="#d6d6d6" rx="1" />
<rect x="157" y="637.5" width="19" height="19" fill="#d6d6d6" rx="1" />
<rect x="213" y="637.5" width="19" height="19" fill="#d6d6d6" rx="1" />
<g transform="translate(73,640)"><circle cx="3" cy="3" r="2.5" fill="#f08080" stroke="#b04040" stroke-width="0.6"/><circle cx="9" cy="3" r="2.5" fill="#f2b370" stroke="#b0703a" stroke-width="0.6"/><rect x="0.5" y="5.5" width="12" height="6" fill="#f08a8a" stroke="#b04040" stroke-width="0.6"/><rect x="1" y="9" width="11" height="4" fill="#8ec5ee" stroke="#4a86b8" stroke-width="0.6"/></g>
<rect x="96.5" y="641.5" width="10" height="10" fill="#a8d4f4" stroke="#4a86b8" stroke-width="0.9" />
<rect x="121.5" y="640.5" width="3" height="13" fill="#a8d4f4" stroke="#4a86b8" stroke-width="0.8" />
<g transform="translate(138,639)"><path d="M3 6 V4 a4.5 4.5 0 0 1 9 0 V6" fill="none" stroke="#8a6a2a" stroke-width="1.2"/><rect x="1" y="6" width="13" height="9" rx="1" fill="#e0b050" stroke="#8a6a2a" stroke-width="0.8"/></g>
<g transform="translate(160,639.5)"><path d="M7.2 0.6 L12.6 5.6 L7.2 10.6 L1.8 5.6 Z" fill="#f2c95a" stroke="#a8822a" stroke-width="0.8"/><path d="M0.8 13 V6.2 L7.6 13 Z" fill="#a9d2f2" stroke="#5a88b5" stroke-width="0.8"/><circle cx="10.2" cy="10" r="3.7" fill="#f4a0a6" stroke="#b85058" stroke-width="0.8"/></g>
<g transform="translate(187,640)"><rect x="0.5" y="3" width="10" height="10" fill="#f4d88a" stroke="#8a6a2a" stroke-width="0.8"/><rect x="3" y="5.5" width="5" height="5" fill="#8ec5ee" stroke="#4a86b8" stroke-width="0.6"/><circle cx="10" cy="5" r="3.3" fill="#f27a80" stroke="#c04048" stroke-width="0.6"/></g>
<line x1="180" y1="639" x2="180" y2="655" stroke="#b0b0b0" stroke-width="1" stroke-dasharray="1 1.5"/>
<line x1="207.8" y1="639" x2="207.8" y2="655" stroke="#b0b0b0" stroke-width="1" stroke-dasharray="1 1.5"/>
<g transform="translate(215,639)"><path d="M3 1 V12 M0.5 9.5 L3 12.5 L5.5 9.5" fill="none" stroke="#4a6a9a" stroke-width="1.3"/><text x="7" y="7" font-family="Liberation Sans" font-size="7" font-weight="bold" fill="#4a6a9a">A</text><text x="7" y="15" font-family="Liberation Sans" font-size="7" font-weight="bold" fill="#d4a020">Z</text></g>
<g transform="translate(237,639)"><path d="M3 1 V12 M0.5 9.5 L3 12.5 L5.5 9.5" fill="none" stroke="#4a6a9a" stroke-width="1.3"/><path d="M7 3 H13 M7 6 H13 M7 9 H13 M7 12 H13" stroke="#777" stroke-width="1.5"/></g>
<rect x="254" y="435" width="2" height="225" fill="#484848" />
<line x1="64" y1="659.5" x2="1215.5" y2="659.5" stroke="#3a3a3a" stroke-width="1.2" />
<rect x="1214" y="81.5" width="2" height="578" fill="#555555" />
<path d="M178 686 A6 6 0 0 1 184 680 H1097 A6 6 0 0 1 1103 686 V720 H178 Z" fill="url(#gdock)"/>
<line x1="178" y1="680.5" x2="1103" y2="680.5" stroke="#806a64" stroke-width="0.8" />
<g transform="translate(182.3,685)"><rect x="0" y="0" width="27" height="27" rx="4" fill="#e9eef3"/><path d="M4 0 H15 Q12 8 12.5 15 H15 Q14.5 21 15.5 27 H4 A4 4 0 0 1 0 23 V4 A4 4 0 0 1 4 0 Z" fill="#2f8ff0"/><path d="M7 8 V11 M19 8 V11" stroke="#1a2a3a" stroke-width="1.6"/><path d="M5.5 17 Q13.5 23 21.5 17" fill="none" stroke="#1a2a3a" stroke-width="1.3"/></g>
<g transform="translate(216.5,686) rotate(-6 13.5 13)"><rect x="1" y="2" width="25" height="23" rx="2" fill="#f6f6f6" stroke="#bdbdbd" stroke-width="0.7"/><rect x="1" y="2" width="25" height="3" fill="#dadada"/><rect x="9" y="11" width="9" height="7" rx="1.2" fill="none" stroke="#333" stroke-width="1.3"/><circle cx="13.5" cy="14.5" r="1.8" fill="none" stroke="#333" stroke-width="1"/><path d="M5 9 V7 H8 M22 9 V7 H19 M5 19 V21 H8 M22 19 V21 H19" fill="none" stroke="#333" stroke-width="1"/></g>
<circle cx="263" cy="698.5" r="14" fill="#e6e6e6"/><circle cx="263" cy="698.5" r="12.3" fill="#2a8ef0"/><circle cx="263" cy="698.5" r="10.5" fill="#3fa7f6"/><path d="M270 691.5 L264.5 700.0 L261.5 697.0 Z" fill="#f0302a"/><path d="M256 705.5 L264.5 700.0 L261.5 697.0 Z" fill="#fafafa"/>
<g transform="translate(297,698.5)"><path d="M0 0 L14 0 A14 14 0 0 0 -7 -12.1 Z" fill="#e33b2e"/><path d="M0 0 L-7 -12.1 A14 14 0 0 0 -7 12.1 Z" fill="#2ba24c"/><path d="M0 0 L-7 12.1 A14 14 0 0 0 14 0 Z" fill="#f8c82a"/><circle r="6.2" fill="#fff"/><circle r="4.8" fill="#3a7de8"/></g>
<g transform="translate(316.5,685)"><path d="M14 0 L27 7 V21 L14 28 L1 21 V7 Z" fill="#7fbf3a"/><path d="M1 7 L14 14 V28 L1 21 Z" fill="#b21a45"/><path d="M27 7 L14 14 V28 L27 21 Z" fill="#3b78c5"/><path d="M14 6 L21 10 V18 L14 22 L7 18 V10 Z" fill="#f4f4f4"/><path d="M7 10 L14 14 L21 10 M14 14 V22" fill="none" stroke="#d0d0d0" stroke-width="0.7"/></g>
<g transform="translate(351,685)"><rect x="0.5" y="0.5" width="26" height="26" rx="5" fill="#1d6fe0"/><rect x="2" y="2" width="23" height="23" rx="4" fill="#3a8ff2"/><path d="M8 20 L13.5 7 L19 20 M9.5 16 H17.5" fill="none" stroke="#bfe0ff" stroke-width="1"/><path d="M24 3 L6 26" stroke="#2a2a2a" stroke-width="3.2" stroke-linecap="round"/><path d="M20 0 L29 3 L26 7 Z" fill="#3a3a3a"/></g>
<circle cx="397.6" cy="698.5" r="13.5" fill="#fff"/><path d="M387.6 709.5 L389.6 703.5 A10.5 10.5 0 1 1 393.6 707.5 Z" fill="#26c14f"/><circle cx="397.6" cy="698.5" r="10.5" fill="#2bc34f"/><path d="M392.6 693.5 q0 7 8 10 l2 -2.5 l-3 -2 l-1.5 1.3 q-3 -1.5 -4 -4 l1.3 -1.5 l-2 -3 Z" fill="#fff"/>
<ellipse cx="431" cy="698" rx="13.5" ry="12" fill="#4aa8f5"/><path d="M422 706 L419 711 L427 708 Z" fill="#4aa8f5"/><ellipse cx="435" cy="704" rx="9" ry="6.5" fill="#fff"/><circle cx="431" cy="704" r="1.2" fill="#2a7ad5"/><circle cx="435" cy="704" r="1.2" fill="#2a7ad5"/><circle cx="439" cy="704" r="1.2" fill="#2a7ad5"/>
<g transform="translate(450.6,685)"><rect x="0" y="0" width="28" height="28" rx="7" fill="#2d8cff"/><rect x="6" y="9.5" width="11.5" height="9" rx="2" fill="#fff"/><path d="M18.5 12.5 L23 10 V18 L18.5 15.5 Z" fill="#fff"/></g>
<g transform="translate(485,685) rotate(-4 13 14)"><rect x="2" y="1" width="21" height="26" fill="#fff" stroke="#d0d0d0" stroke-width="0.6"/><rect x="2" y="1" width="21" height="4" fill="#f29a2a"/><rect x="5" y="8" width="10" height="8" fill="#f4b26a"/><path d="M5 19 H19 M5 22 H17" stroke="#bbb" stroke-width="0.8"/><path d="M25 2 L15 24" stroke="#f0a030" stroke-width="2.5"/><path d="M15 24 L14 27" stroke="#333" stroke-width="1.5"/></g>
<g transform="translate(518,685)"><path d="M2 3 H26 L24 15 H4 Z" fill="#2b7ee8"/><rect x="7" y="5" width="14" height="8" fill="#e8f2ff"/><circle cx="12" cy="9" r="2" fill="#f3a020"/><rect x="14" y="8" width="4" height="3" fill="#3ab060"/><rect x="13" y="15" width="2" height="10" fill="#b8bfc8"/><ellipse cx="14" cy="26" rx="6" ry="1.8" fill="#b8bfc8"/></g>
<g transform="translate(551.5,685)"><rect x="1" y="21" width="26" height="6" fill="#f0f0f0"/><rect x="3" y="13" width="4.5" height="10" fill="#e64040"/><rect x="8.5" y="8" width="4.5" height="15" fill="#f29a20"/><rect x="14" y="1" width="4.5" height="22" fill="#3ac060"/><rect x="19.5" y="6" width="4.5" height="17" fill="#2a9df0"/></g>
<circle cx="599" cy="698.5" r="14" fill="#f4f4f4"/><ellipse cx="604.00" cy="698.50" rx="6" ry="3.6" fill="#f6a623" opacity="0.85" transform="rotate(0 604.00 698.50)"/><ellipse cx="602.54" cy="702.04" rx="6" ry="3.6" fill="#f8d230" opacity="0.85" transform="rotate(45 602.54 702.04)"/><ellipse cx="599.00" cy="703.50" rx="6" ry="3.6" fill="#9ad33a" opacity="0.85" transform="rotate(90 599.00 703.50)"/><ellipse cx="595.46" cy="702.04" rx="6" ry="3.6" fill="#3fc06a" opacity="0.85" transform="rotate(135 595.46 702.04)"/><ellipse cx="594.00" cy="698.50" rx="6" ry="3.6" fill="#2ab8d8" opacity="0.85" transform="rotate(180 594.00 698.50)"/><ellipse cx="595.46" cy="694.96" rx="6" ry="3.6" fill="#5a7ae8" opacity="0.85" transform="rotate(225 595.46 694.96)"/><ellipse cx="599.00" cy="693.50" rx="6" ry="3.6" fill="#b05ae0" opacity="0.85" transform="rotate(270 599.00 693.50)"/><ellipse cx="602.54" cy="694.96" rx="6" ry="3.6" fill="#f05a7a" opacity="0.85" transform="rotate(315 602.54 694.96)"/>
<g transform="translate(619.7,685) rotate(-5 13 14)"><rect x="1" y="1" width="24" height="26" fill="#fff" stroke="#c8c8c8" stroke-width="0.8" stroke-dasharray="1.5 1"/><rect x="3.5" y="3.5" width="19" height="21" fill="#5a9ad0"/><path d="M3.5 18 Q10 12 22.5 19 V24.5 H3.5 Z" fill="#3a6a9a"/><path d="M8 9 L14 14 L19 11 L13 17 Z" fill="#6a4a2a"/><circle cx="10" cy="9" r="1.8" fill="#fff"/></g>
<g transform="translate(652.5,685) rotate(-5 13.5 14)"><rect x="1" y="1" width="25" height="26" rx="2" fill="#fff" stroke="#d0d0d0" stroke-width="0.6"/><rect x="1" y="1" width="25" height="7" rx="2" fill="#e84a3a"/><text x="13.5" y="7" font-family="Liberation Sans" font-size="5.5" fill="#fff" text-anchor="middle">OCT</text><text x="13.5" y="23.5" font-family="Liberation Sans" font-size="14" fill="#222" text-anchor="middle">23</text></g>
<g transform="translate(687.5,685) rotate(-6 12.5 14)"><rect x="1" y="1" width="23" height="26" rx="2" fill="#fff" stroke="#d0d0d0" stroke-width="0.6"/><circle cx="6" cy="7" r="1.6" fill="#3a7ae8"/><circle cx="6" cy="12.5" r="1.6" fill="#e84a3a"/><circle cx="6" cy="18" r="1.6" fill="#f29a2a"/><circle cx="6" cy="23" r="1.6" fill="#333"/><path d="M9.5 7 H21 M9.5 12.5 H21 M9.5 18 H21 M9.5 23 H21" stroke="#ddd" stroke-width="0.8"/></g>
<g transform="translate(721.0,685) rotate(-5 12.5 14)"><rect x="1" y="1" width="23" height="26" fill="#fdfdf6" stroke="#d8d8c8" stroke-width="0.6"/><rect x="1" y="1" width="23" height="5" fill="#f8d44a"/><path d="M3 10 H22 M3 14 H22 M3 18 H22 M3 22 H22" stroke="#e0e0d8" stroke-width="0.7"/></g>
<polygon points="766.80,684.00 770.62,693.74 781.07,694.36 772.98,701.01 775.62,711.14 766.80,705.50 757.98,711.14 760.62,701.01 752.53,694.36 762.98,693.74" fill="#8a3ae0" stroke="#c9a8f8" stroke-width="1.2"/><rect x="762.8" y="697" width="6" height="5" rx="1" fill="#fff"/><path d="M768.8 699 L771.8 697 V702 Z" fill="#fff"/>
<circle cx="800.8" cy="698.5" r="14" fill="#151515"/><text x="804.3" y="702.5" font-family="Liberation Sans" font-weight="bold" font-size="10" fill="#fff" text-anchor="middle">tv</text><circle cx="795.8" cy="699.5" r="2.8" fill="#fff"/>
<circle cx="834" cy="698.5" r="14" fill="#f28a20"/><path d="M825 693.5 Q830 691.5 834 694.5 V704.5 Q830 701.5 825 703.5 Z M843 693.5 Q838 691.5 834 694.5 V704.5 Q838 701.5 843 703.5 Z" fill="#fff"/>
<g transform="translate(854,685)"><rect x="0" y="0" width="28" height="28" rx="4" fill="#1a1a1a"/><rect x="3.0" y="22.0" width="3.8" height="2.4" fill="#f0a020"/><rect x="7.6" y="22.0" width="3.8" height="2.4" fill="#e85a4a"/><rect x="7.6" y="18.8" width="3.8" height="2.4" fill="#e85a4a"/><rect x="12.2" y="22.0" width="3.8" height="2.4" fill="#c040a0"/><rect x="12.2" y="18.8" width="3.8" height="2.4" fill="#c040a0"/><rect x="12.2" y="15.6" width="3.8" height="2.4" fill="#c040a0"/><rect x="16.8" y="22.0" width="3.8" height="2.4" fill="#40a0e0"/><rect x="16.8" y="18.8" width="3.8" height="2.4" fill="#40a0e0"/><rect x="16.8" y="15.6" width="3.8" height="2.4" fill="#40a0e0"/><rect x="16.8" y="12.4" width="3.8" height="2.4" fill="#40a0e0"/><rect x="21.4" y="22.0" width="3.8" height="2.4" fill="#40c060"/><rect x="21.4" y="18.8" width="3.8" height="2.4" fill="#40c060"/><rect x="21.4" y="15.6" width="3.8" height="2.4" fill="#40c060"/><rect x="21.4" y="12.4" width="3.8" height="2.4" fill="#40c060"/><rect x="21.4" y="9.2" width="3.8" height="2.4" fill="#40c060"/></g>
<circle cx="902" cy="698.5" r="14" fill="#1e8ef0"/><path d="M900 689.5 L908 704.5 M904 689.5 L896 704.5 M893 701.5 H911" stroke="#fff" stroke-width="2.2" stroke-linecap="round"/>
<rect x="921" y="685" width="28" height="28" rx="5" fill="#8a8a8a"/><circle cx="935" cy="698.5" r="11" fill="#555"/><circle cx="935" cy="698.5" r="9" fill="#b8b8b8"/><circle cx="935" cy="698.5" r="3" fill="#555"/><path d="M935 698.5 L935 689.5 M935 698.5 L942.8 703.0 M935 698.5 L927.2 703.0" stroke="#555" stroke-width="2.5"/>
<g transform="translate(955.7,685)"><rect x="0" y="0" width="26" height="28" fill="#f6f6f6" stroke="#d8d8d8" stroke-width="0.6"/><path d="M13 4 q-3 3 0 6 q3 3 0 6" fill="none" stroke="#e87a20" stroke-width="1.3"/><path d="M7 18 H19 Q19 23 13 23 Q7 23 7 18 Z" fill="none" stroke="#3a6ab0" stroke-width="1.2"/><path d="M5 25 Q13 27 21 25" fill="none" stroke="#3a6ab0" stroke-width="1"/></g>
<g transform="translate(1002,686)"><rect x="0" y="2" width="28" height="24" fill="#1c1c1c"/><rect x="2" y="6" width="24" height="17" fill="#d8d8d8"/><rect x="9" y="9" width="11" height="8" fill="#fafafa" stroke="#888" stroke-width="0.5"/><path d="M4 9 H8 M4 12 H8 M4 15 H8" stroke="#777" stroke-width="0.8"/></g>
<g transform="translate(1036,687)"><path d="M0 3 H10 L12 5 H28 V25 H0 Z" fill="#5cb8f0"/><rect x="0" y="7" width="28" height="18" fill="#6ec6f6"/><circle cx="14" cy="16" r="5" fill="#4aa0d8"/><path d="M14 12.5 V19 M11.5 16.5 L14 19 L16.5 16.5" fill="none" stroke="#7ed0fa" stroke-width="1.3"/></g>
<g transform="translate(1072,685)"><ellipse cx="12" cy="3.5" rx="11.5" ry="3" fill="#e4e4e4" stroke="#b8b8b8" stroke-width="0.7"/><path d="M0.5 3.5 L3 26 Q12 29 21 26 L23.5 3.5 Q12 7 0.5 3.5 Z" fill="#d8d8d8"/><path d="M6 8 L7 25 M12 8.5 V26 M18 8 L17 25" stroke="#c8c8c8" stroke-width="0.6"/></g>
<line x1="993.7" y1="686" x2="993.7" y2="713" stroke="#3a2a26" stroke-width="1" />
<circle cx="195.8" cy="716.5" r="1.3" fill="#111" />
<circle cx="330.5" cy="716.5" r="1.3" fill="#111" />
<circle cx="968.7" cy="716.5" r="1.3" fill="#111" />
<rect x="64" y="18" width="541.5" height="423.3" fill="#d0d3da" rx="5" filter="url(#shadow)"/>
<rect x="64.4" y="18.4" width="540.7" height="422.5" fill="none" rx="5" stroke="#b9bbc0" stroke-width="0.8" />
<path d="M64 35.5 V23 A5 5 0 0 1 69 18 H600 A5 5 0 0 1 605 23 V35.5 Z" fill="url(#gtitle)"/>
<line x1="64" y1="35.5" x2="605" y2="35.5" stroke="#b4b4b4" stroke-width="1" />
<circle cx="75" cy="27" r="5" fill="#f14b54" stroke="#dc3a40" stroke-width="0.6" />
<circle cx="91" cy="27" r="5" fill="#f5b52e" stroke="#dd9c1e" stroke-width="0.6" />
<circle cx="107" cy="27" r="5" fill="#2fc945" stroke="#21a834" stroke-width="0.6" />
<text x="75.3" y="62.5" font-family="Liberation Sans" font-size="14.6" fill="#111" textLength="227.5" lengthAdjust="spacingAndGlyphs" stroke="#111" stroke-width="0.28">¿Qué le ponemos a tus taquitos?</text>
<rect x="96.3" y="81.8" width="13.4" height="13.4" fill="none" rx="3.5" stroke="#6f8ec0" stroke-width="1.8" />
<rect x="97.5" y="83" width="11" height="11" fill="url(#gcb)" rx="2" stroke="#8a8a8a" stroke-width="0.9" />
<text x="114.2" y="94.2" font-family="Liberation Sans" font-size="14.6" fill="#111" textLength="50" lengthAdjust="spacingAndGlyphs" stroke="#111" stroke-width="0.28">Cebolla</text>
<rect x="97.5" y="128" width="11" height="11" fill="url(#gcb)" rx="2" stroke="#8a8a8a" stroke-width="0.9" />
<text x="114.2" y="139.3" font-family="Liberation Sans" font-size="14.6" fill="#111" textLength="54" lengthAdjust="spacingAndGlyphs" stroke="#111" stroke-width="0.28">Cilantro</text>
<rect x="97.5" y="183.5" width="11" height="11" fill="url(#gcb)" rx="2" stroke="#8a8a8a" stroke-width="0.9" />
<text x="114.5" y="194" font-family="Liberation Sans" font-size="14.6" fill="#111" stroke="#111" stroke-width="0.28">Piña</text>
<rect x="97.5" y="208.3" width="11" height="11" fill="url(#gcb)" rx="2" stroke="#8a8a8a" stroke-width="0.9" />
<text x="114.5" y="218.5" font-family="Liberation Sans" font-size="14.6" fill="#111" textLength="43" lengthAdjust="spacingAndGlyphs" stroke="#111" stroke-width="0.28">Queso</text>
<text x="364.5" y="62.4" font-family="Liberation Sans" font-size="14.6" fill="#111" textLength="174" lengthAdjust="spacingAndGlyphs" stroke="#111" stroke-width="0.28">¿De qué quieres tu agua?</text>
<circle cx="391.1" cy="89.3" r="5.4" fill="url(#grb)" stroke="#7a7a7a" stroke-width="0.9" />
<text x="402.3" y="94.39999999999999" font-family="Liberation Sans" font-size="14.6" fill="#111" textLength="61" lengthAdjust="spacingAndGlyphs" stroke="#111" stroke-width="0.28">Horchata</text>
<circle cx="391.1" cy="111.6" r="5.4" fill="url(#grb)" stroke="#7a7a7a" stroke-width="0.9" />
<text x="402.3" y="116.69999999999999" font-family="Liberation Sans" font-size="14.6" fill="#111" textLength="73.5" lengthAdjust="spacingAndGlyphs" stroke="#111" stroke-width="0.28">Tamarindo</text>
<circle cx="391.1" cy="133.9" r="5.4" fill="url(#grb)" stroke="#7a7a7a" stroke-width="0.9" />
<text x="402.3" y="139.0" font-family="Liberation Sans" font-size="14.6" fill="#111" textLength="52.5" lengthAdjust="spacingAndGlyphs" stroke="#111" stroke-width="0.28">Jamaica</text>
<text x="365" y="171" font-family="Liberation Sans" font-size="14.6" fill="#111" textLength="102.5" lengthAdjust="spacingAndGlyphs" stroke="#111" stroke-width="0.28">Elije tu combo:</text>
<rect x="375.5" y="191" width="161.5" height="21" fill="url(#gcombo)" rx="3" stroke="#606060" stroke-width="1" />
<path d="M524 191.5 H534 A2.5 2.5 0 0 1 536.5 194 V209.5 A2.5 2.5 0 0 1 534 212 H524 Z" fill="url(#garrow)" stroke="#606060" stroke-width="1"/>
<path d="M527.6 198.5 L533.4 198.5 L530.5 204 Z" fill="#222"/>
<text x="379" y="207.5" font-family="Liberation Sans" font-size="14.6" fill="#111" textLength="75.5" lengthAdjust="spacingAndGlyphs" stroke="#111" stroke-width="0.28">Sin Combo</text>
<rect x="267.5" y="239.6" width="110" height="27.6" fill="rgba(0,0,0,0.12)" rx="4.5" />
<rect x="267.5" y="238.6" width="110" height="27.8" fill="url(#gbtn)" rx="4.5" stroke="#85868a" stroke-width="1" />
<text x="277" y="258.1" font-family="Liberation Sans" font-size="14.6" fill="#111" textLength="91.5" lengthAdjust="spacingAndGlyphs" stroke="#111" stroke-width="0.28">Tomar Orden</text>
<text x="76" y="298" font-family="Liberation Sans" font-size="14.6" fill="#111" textLength="108" lengthAdjust="spacingAndGlyphs" stroke="#111" stroke-width="0.28">Tus tacos van...</text>
<text x="347" y="298" font-family="Liberation Sans" font-size="14.6" fill="#111" textLength="110.5" lengthAdjust="spacingAndGlyphs" stroke="#111" stroke-width="0.28">Tu agua es de...</text>
<text x="347" y="362" font-family="Liberation Sans" font-size="14.6" fill="#111" textLength="210.5" lengthAdjust="spacingAndGlyphs" stroke="#111" stroke-width="0.28">El combo que legiste incluye...</text>
<rect x="77.5" y="307.5" width="201" height="86" fill="#ffffff" stroke="#909195" stroke-width="1" />
<rect x="348" y="307.5" width="181" height="33" fill="#ffffff" stroke="#909195" stroke-width="1" />
<rect x="348" y="381" width="208.5" height="29.5" fill="#ffffff" stroke="#909195" stroke-width="1" />
<path d="M425.5 160.5 L425.5 175 L429 171.8 L431.3 177 L433.3 176.1 L431 171 L435.5 171 Z" fill="#111" stroke="#fff" stroke-width="0.9"/>
</svg></body></html>
